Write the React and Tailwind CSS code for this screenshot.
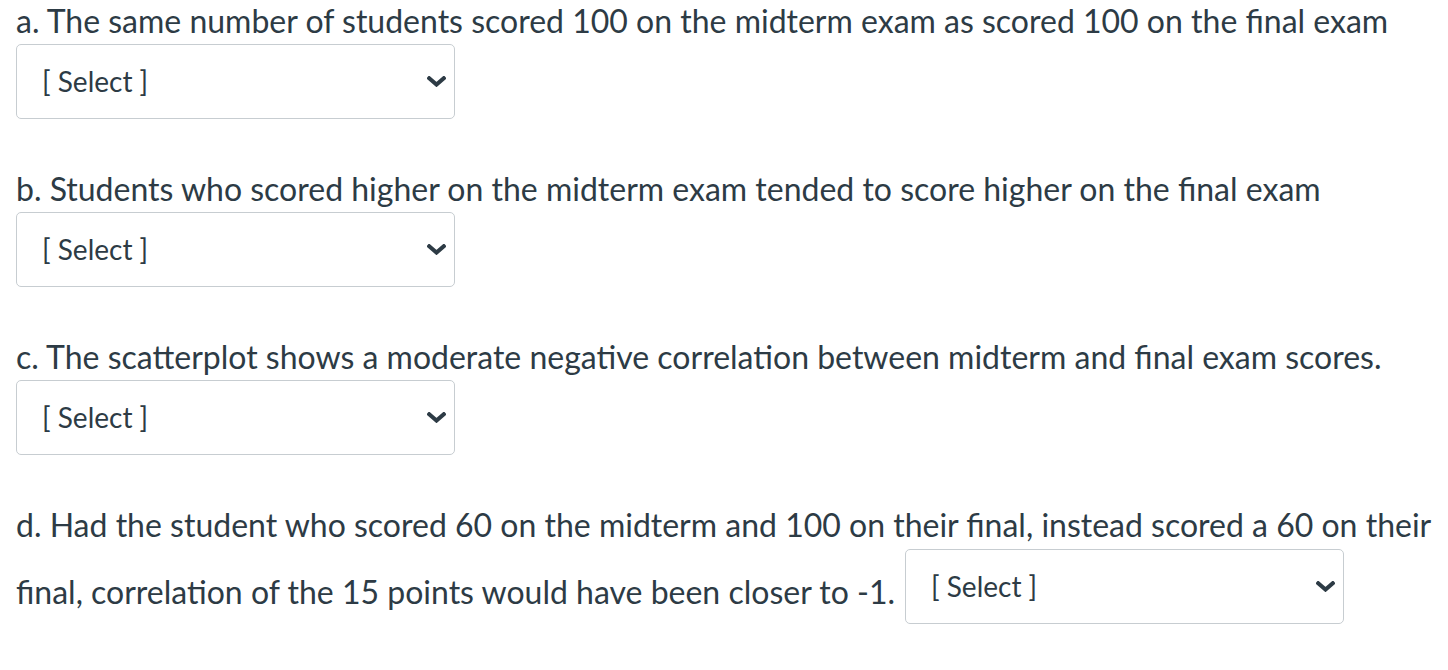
export default function App() {
  const Chevron = () => (
    <svg width="19" height="11" viewBox="0 0 19 11" className="shrink-0">
      <path d="M2.2 2.2 L9.5 8.6 L16.8 2.2" fill="none" stroke="#2d3b45" strokeWidth="4" strokeLinecap="square" strokeLinejoin="miter" />
    </svg>
  );
  const Select = ({ className = "" }) => (
    <div className={"flex items-center justify-between w-[439px] h-[75px] border border-[#c7cdd1] rounded-[5px] bg-white pl-[25px] pr-[8px] shrink-0 " + className}>
      <span className="text-[28px] leading-[42px] pb-[2px]">[ Select ]</span>
      <Chevron />
    </div>
  );
  return (
    <div className="bg-white w-[1448px] h-[670px] overflow-hidden text-[#2d3b45] pl-[16px]" style={{ fontFamily: "Lato, 'Noto Sans', sans-serif" }}>
      <div className="flex flex-col">
        <div>
          <p className="text-[32px] leading-[42px] whitespace-nowrap">a. The same number of students scored 100 on the midterm exam as scored 100 on the final exam</p>
          <Select className="mt-[2px]" />
        </div>
        <div className="mt-[49px]">
          <p className="text-[32px] leading-[42px] whitespace-nowrap">b. Students who scored higher on the midterm exam tended to score higher on the final exam</p>
          <Select className="mt-[2px]" />
        </div>
        <div className="mt-[49px]">
          <p className="text-[32px] leading-[42px] whitespace-nowrap">c. The scatterplot shows a moderate negative correlation between midterm and final exam scores.</p>
          <Select className="mt-[2px]" />
        </div>
        <div className="mt-[49px]">
          <p className="text-[32px] leading-[42px] whitespace-nowrap">d. Had the student who scored 60 on the midterm and 100 on their final, instead scored a 60 on their</p>
          <div className="flex items-start mt-[3px]">
            <p className="text-[32px] leading-[42px] whitespace-nowrap mt-[22px]">final, correlation of the 15 points would have been closer to -1.</p>
            <Select className="ml-[10px]" />
          </div>
        </div>
      </div>
    </div>
  );
}
